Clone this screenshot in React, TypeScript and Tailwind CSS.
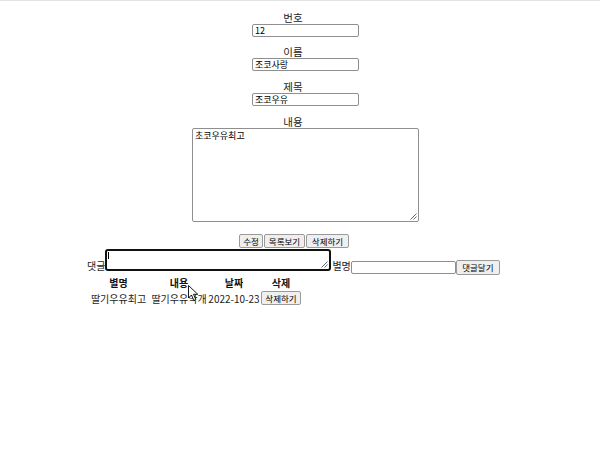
import React from "react";

const font = { fontFamily: '"Noto Sans CJK KR", "Noto Sans", sans-serif' };

function Label({ children }: { children: React.ReactNode }) {
  return (
    <div className="w-[600px] pr-[14px] text-center text-[10.5px] leading-[13px] text-[#222]">
      {children}
    </div>
  );
}

function Field({ value }: { value: string }) {
  return (
    <div className="ml-[252px] flex h-[13px] w-[107px] items-center rounded-[2px] border border-[#8f8f8f] bg-white pl-[2px] text-[9px] leading-[11px] text-black">
      {value}
    </div>
  );
}

function Btn({ children, className = "" }: { children: React.ReactNode; className?: string }) {
  return (
    <div
      className={
        "flex items-center justify-center rounded-[2px] border border-[#9a9a9a] bg-[#efefef] text-[8.5px] leading-[11px] text-black " +
        className
      }
    >
      {children}
    </div>
  );
}

function Grip() {
  return (
    <svg className="absolute bottom-[1px] right-[1px]" width="7" height="7" viewBox="0 0 7 7">
      <line x1="6.5" y1="0.5" x2="0.5" y2="6.5" stroke="#555" strokeWidth="0.9" />
      <line x1="6.5" y1="3.5" x2="3.5" y2="6.5" stroke="#555" strokeWidth="0.9" />
    </svg>
  );
}

export default function App() {
  return (
    <div className="relative h-[454px] w-[600px] overflow-hidden border-t border-[#e2e2e2] bg-white" style={font}>
      <div className="flex flex-col">
        <div className="mt-[10px]">
          <Label>번호</Label>
        </div>
        <Field value="12" />
        <div className="mt-[8px]">
          <Label>이름</Label>
        </div>
        <Field value="조코사랑" />
        <div className="mt-[9px]">
          <Label>제목</Label>
        </div>
        <Field value="조코우유" />
        <div className="mt-[9px]">
          <Label>내용</Label>
        </div>
        <div className="relative ml-[192px] h-[94px] w-[227px] rounded-[2px] border border-[#8f8f8f] bg-white pl-[2px] pt-[1px] text-[9px] leading-[11px] text-black">
          초코우유최고
          <Grip />
        </div>
        <div className="ml-[239px] mt-[12px] flex h-[14px] gap-[1px]">
          <Btn className="w-[24px]">수정</Btn>
          <Btn className="w-[41px]">목록보기</Btn>
          <Btn className="w-[43px]">삭제하기</Btn>
        </div>
        <div className="ml-[87px] mt-[1px] flex items-end">
          <span className="mb-[-1px] text-[10px] leading-[13px] text-[#222]">댓글</span>
          <div className="relative h-[22px] w-[226px] rounded-[3px] border-2 border-[#111] bg-white">
            <div className="absolute left-[1px] top-[1px] h-[7px] w-[1px] bg-black" />
            <Grip />
          </div>
          <span className="mb-[-1px] ml-[1px] text-[10px] leading-[13px] text-[#222]">별명</span>
          <div className="mb-[-3px] h-[13px] w-[105px] rounded-[2px] border border-[#8f8f8f] bg-white" />
          <Btn className="mb-[-4px] h-[15px] w-[44px]">댓글달기</Btn>
        </div>
        <div className="ml-[88px] mt-[5px] grid grid-cols-[61px_60px_50px_44px] text-center text-[10px] leading-[13px] text-[#111]">
          <div className="font-bold">별명</div>
          <div className="font-bold">내용</div>
          <div className="font-bold">날짜</div>
          <div className="font-bold">삭제</div>
          <div className="flex h-[18px] items-center justify-center whitespace-nowrap text-[#222]">딸기우유최고</div>
          <div className="flex h-[18px] items-center justify-center whitespace-nowrap text-[#222]">딸기우유악개</div>
          <div className="flex h-[18px] items-center justify-center whitespace-nowrap text-[#222]">2022-10-23</div>
          <div className="flex h-[18px] items-center justify-center">
            <Btn className="h-[14px] w-[40px]">삭제하기</Btn>
          </div>
        </div>
      </div>
      <svg className="absolute left-[188px] top-[284px]" width="11" height="17" viewBox="0 0 11 17">
        <path d="M0.5 0.5 L0.5 13 L3.5 10 L5.8 15.5 L7.8 14.6 L5.5 9.3 L9.8 9.3 Z" fill="#fff" stroke="#000" strokeWidth="0.9" strokeLinejoin="round" />
      </svg>
    </div>
  );
}
